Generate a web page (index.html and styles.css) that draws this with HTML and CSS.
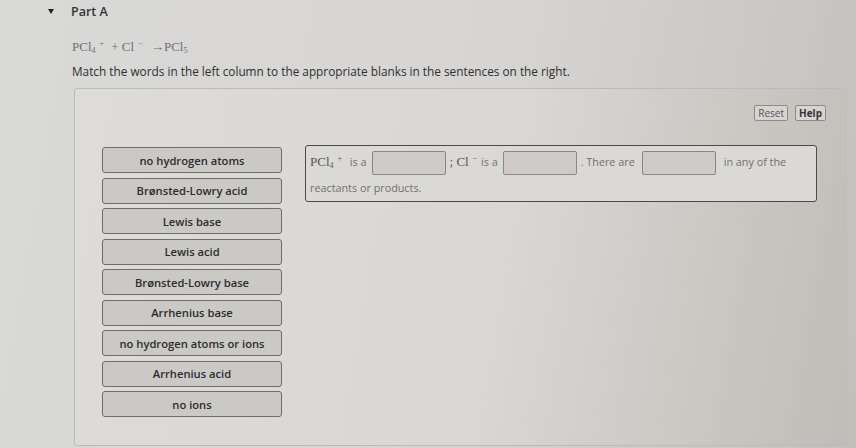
FILE: index.html
```html
<!DOCTYPE html>
<html>
<head>
<meta charset="utf-8">
<link rel="stylesheet" href="styles.css">
</head>
<body>
<div class="page">
  <div class="part-head">
    <span class="caret"></span>
    <span class="part-title">Part A</span>
  </div>
  <div class="content">
    <p class="equation">PCl<sub>4</sub><sup class="plus">+</sup> + Cl<sup class="minus">−</sup> →PCl<sub>5</sub></p>
    <p class="instructions">Match the words in the left column to the appropriate blanks in the sentences on the right.</p>
    <div class="panel">
      <div class="toolbar">
        <button class="tool">Reset</button>
        <button class="tool bold">Help</button>
      </div>
      <div class="workspace">
        <div class="choices">
          <div class="chip">no hydrogen atoms</div>
          <div class="chip">Brønsted-Lowry acid</div>
          <div class="chip">Lewis base</div>
          <div class="chip">Lewis acid</div>
          <div class="chip">Brønsted-Lowry base</div>
          <div class="chip">Arrhenius base</div>
          <div class="chip">no hydrogen atoms or ions</div>
          <div class="chip">Arrhenius acid</div>
          <div class="chip">no ions</div>
        </div>
        <div class="sentence"><span class="chem">PCl<sub>4</sub><sup class="plus">+</sup></span> is a<span class="blank"></span><span class="chem">; Cl<sup class="minus">−</sup></span> is a<span class="blank"></span>. There are<span class="blank b3"></span>in any of the reactants or products.</div>
      </div>
    </div>
  </div>
</div>
</body>
</html>
```

FILE: styles.css
```css
html, body {
  margin: 0;
  padding: 0;
}
body {
  width: 856px;
  height: 448px;
  overflow: hidden;
  background: linear-gradient(100deg, #d9d9d7 0%, #d6d5d3 55%, #c3c0bc 100%);
  font-family: "Open Sans", "Noto Sans", sans-serif;
  color: #2e2e2e;
}
.page {
  padding-top: 3px;
}
.part-head {
  display: flex;
  align-items: center;
  height: 16px;
}
.caret {
  width: 0;
  height: 0;
  margin-left: 48px;
  border-left: 3.5px solid transparent;
  border-right: 3.5px solid transparent;
  border-top: 5px solid #222;
}
.part-title {
  margin-left: 17px;
  font-size: 12.5px;
  font-weight: 600;
  color: #333;
}
.content {
  padding-left: 72px;
}
sub, sup {
  line-height: 0;
  font-size: 8px;
}
sub {
  vertical-align: -2px;
}
sup {
  vertical-align: 5px;
}
.equation {
  margin: 20px 0 0 0;
  font-family: "Liberation Serif", serif;
  font-size: 13px;
  color: #707070;
  line-height: 15px;
}
.equation sup.plus {
  margin: 0 4px 0 4px;
}
.equation sup.minus {
  margin: 0 5px 0 4px;
}
.instructions {
  margin: 10px 0 0 0;
  font-size: 11.8px;
  line-height: 14px;
  font-weight: 500;
  color: #2f2f2f;
}
.panel {
  margin-top: 10px;
  margin-left: 2px;
  width: 773px;
  height: 358px;
  border: 1px solid #bdbbb8;
  border-radius: 3px;
  background: linear-gradient(100deg, #dddcda 0%, #d9d7d4 55%, #c0bcb7 100%);
  box-sizing: border-box;
}
.toolbar {
  display: flex;
  justify-content: flex-end;
  gap: 7px;
  padding: 16px 20px 0 0;
}
.tool {
  height: 16px;
  padding: 0 3px;
  font-family: "Open Sans", "Noto Sans", sans-serif;
  font-size: 10px;
  line-height: 13px;
  color: #555;
  background: #d6d4d1;
  border: 1px solid #8e8c89;
  border-radius: 2px;
}
.tool.bold {
  font-weight: 700;
  color: #333;
}
.workspace {
  display: flex;
  align-items: flex-start;
  padding: 24px 0 0 27px;
}
.choices {
  display: flex;
  flex-direction: column;
  gap: 4.5px;
  width: 180px;
  margin-top: 2px;
}
.chip {
  height: 26px;
  box-sizing: border-box;
  border: 1.5px solid #6e6d6b;
  border-radius: 3px;
  background: #cbc9c6;
  font-size: 11.2px;
  font-weight: 600;
  color: #2c2c2c;
  display: flex;
  align-items: center;
  justify-content: center;
}
.sentence {
  margin-left: 23px;
  width: 512px;
  height: 57px;
  box-sizing: border-box;
  border: 1.5px solid #4a4a4a;
  border-radius: 3px;
  padding: 3px 6px 0 4px;
  font-size: 10.8px;
  line-height: 25px;
  color: #707070;
  background: #dbd9d6;
}
.chem {
  font-family: "Liberation Serif", serif;
  font-size: 13px;
  color: #555;
}
.chem sup.plus {
  margin: 0 5px 0 4px;
}
.chem sup.minus {
  margin: 0 1px 0 4px;
}
.blank {
  display: inline-block;
  width: 74px;
  height: 24px;
  box-sizing: border-box;
  border: 1.5px solid #8a8886;
  border-radius: 2px;
  background: #cecbc8;
  vertical-align: middle;
  margin: 0 4px 0 5px;
}
.b3 {
  margin: 0 8px 0 7px;
}
```
